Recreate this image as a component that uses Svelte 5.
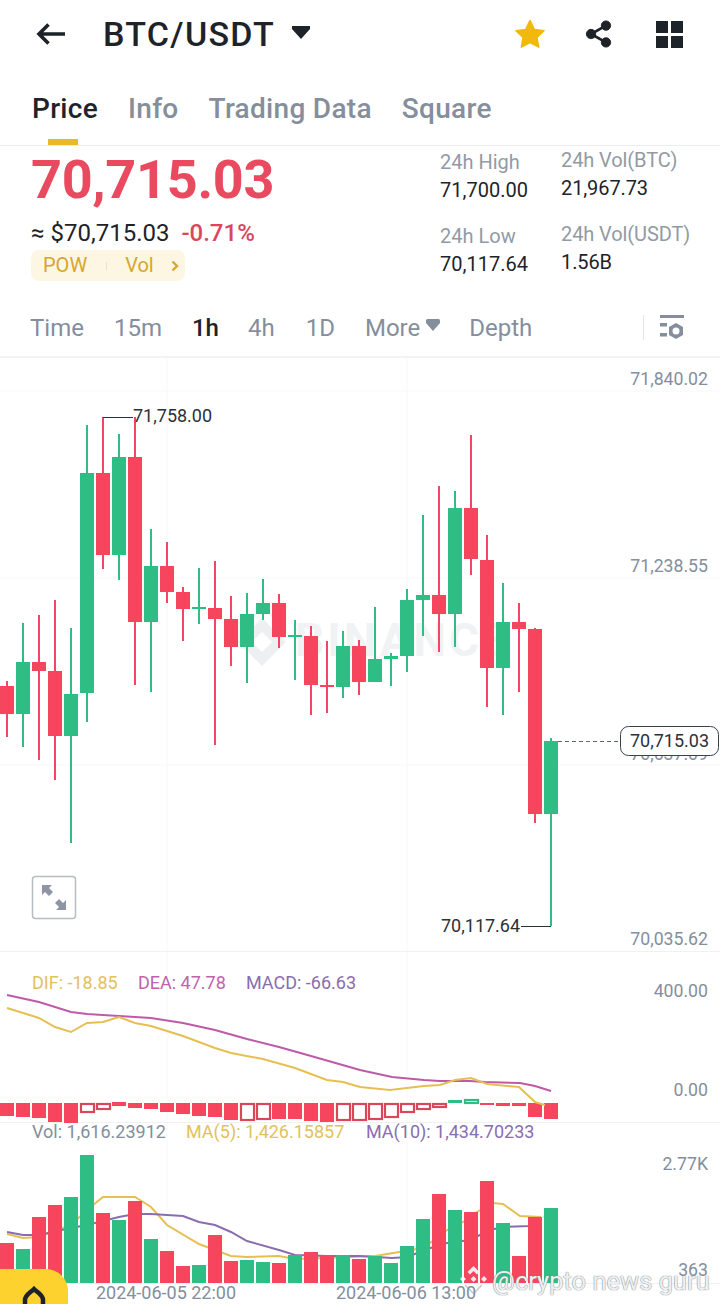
<script>
  const red = '#f6465d';
  const green = '#2ebd85';

  // top, bottom, wickTop, wickBottom, up
  const candles = [
    [686, 714, 681, 737, 0], [662, 714, 623, 747, 1], [662, 671, 615, 760, 0], [671, 736, 600, 780, 0],
    [694, 736, 628, 843, 1], [473, 693, 425, 722, 1], [473, 555, 417, 569, 0], [457, 555, 434, 580, 1],
    [457, 622, 417, 685, 0], [566, 622, 529, 692, 1], [566, 592, 542, 603, 0], [592, 609, 587, 641, 0],
    [607, 609, 568, 624, 1], [608, 619, 561, 745, 0], [619, 647, 596, 666, 0], [614, 647, 593, 683, 1],
    [603, 614, 579, 620, 1], [603, 637, 594, 648, 0], [635, 637, 620, 680, 1], [636, 685, 626, 715, 0],
    [685, 687, 641, 713, 0], [646, 687, 631, 698, 1], [646, 682, 640, 695, 0], [659, 682, 607, 682, 1],
    [656, 659, 653, 686, 1], [600, 656, 589, 672, 1], [595, 600, 515, 636, 1], [595, 614, 486, 652, 0],
    [508, 614, 491, 647, 1], [508, 559, 435, 575, 0], [560, 668, 535, 707, 0], [622, 668, 583, 715, 1],
    [622, 629, 603, 692, 0], [629, 814, 628, 823, 0], [741, 814, 738, 926, 1]
  ];

  const volumes = [
    [1243, 0], [1249, 1], [1217, 0], [1205, 0], [1197, 1], [1155, 1], [1213, 0], [1220, 1], [1201, 0],
    [1239, 1], [1251, 0], [1266, 0], [1265, 1], [1235, 0], [1261, 0], [1260, 1], [1262, 1], [1263, 0],
    [1255, 1], [1252, 0], [1256, 0], [1255, 1], [1259, 0], [1256, 1], [1263, 1], [1246, 1], [1219, 1],
    [1194, 0], [1210, 1], [1212, 0], [1181, 0], [1223, 1], [1256, 0], [1217, 0], [1208, 1]
  ];

  // top, bottom, hollow, up
  const macd = [
    [1103, 1116, 0, 0], [1103, 1117, 0, 0], [1103, 1118, 0, 0], [1103, 1122, 0, 0], [1103, 1123, 0, 0],
    [1103, 1112, 1, 0], [1103, 1109, 1, 0], [1102, 1106, 0, 0], [1103, 1108, 0, 0], [1103, 1109, 0, 0],
    [1103, 1112, 0, 0], [1103, 1114, 0, 0], [1103, 1116, 0, 0], [1103, 1117, 0, 0], [1103, 1120, 0, 0],
    [1103, 1120, 1, 0], [1103, 1119, 1, 0], [1103, 1119, 0, 0], [1103, 1119, 0, 0], [1103, 1121, 0, 0],
    [1103, 1122, 0, 0], [1103, 1120, 1, 0], [1103, 1120, 1, 0], [1103, 1119, 1, 0], [1103, 1117, 1, 0],
    [1103, 1112, 1, 0], [1103, 1109, 1, 0], [1103, 1107, 1, 0], [1100, 1103, 0, 1], [1099, 1103, 1, 1],
    [1103, 1105, 0, 0], [1103, 1106, 0, 0], [1103, 1106, 0, 0], [1103, 1117, 0, 0], [1103, 1119, 0, 0]
  ];

  const xAt = (i) => 7 + i * 16;

  const dea = '7,995 39,1002 71,1012 87,1014 119,1016 151,1018 183,1023 215,1030 247,1039 279,1047 311,1056 360,1070 392,1077 424,1080 440,1081 470,1081 485,1082 520,1083 535,1086 551,1091';
  const dif = '7,1008 39,1018 55,1027 71,1032 87,1023 103,1022 119,1017 135,1023 151,1026 183,1036 215,1048 231,1053 263,1059 295,1068 327,1080 343,1082 360,1087 390,1090 424,1086 440,1085 455,1080 471,1078 487,1084 519,1087 535,1102 545,1105';
  const ma5 = '7,1234 23,1238 39,1237 71,1225 87,1210 103,1197 119,1197 135,1197 151,1207 167,1225 199,1244 231,1256 247,1257 279,1256 295,1259 327,1258 375,1256 423,1248 430,1243 447,1230 463,1222 477,1212 493,1203 503,1204 520,1216 541,1217';
  const ma10 = '7,1232 23,1235 39,1235 71,1228 87,1225 119,1217 135,1214 151,1214 183,1216 199,1222 215,1225 231,1232 247,1241 279,1250 295,1255 327,1256 360,1256 392,1258 408,1257 424,1250 447,1243 470,1240 490,1230 503,1227 530,1226 541,1222';

  const tabs = ['Price', 'Info', 'Trading Data', 'Square'];
  const stats = [
    { label: '24h High', value: '71,700.00', label2: '24h Vol(BTC)', value2: '21,967.73' },
    { label: '24h Low', value: '70,117.64', label2: '24h Vol(USDT)', value2: '1.56B' }
  ];
</script>

<style>
  :global(body) {
    background: #fff;
    font-family: Roboto, "Liberation Sans", sans-serif;
    overflow: hidden;
  }

  .page {
    width: 720px;
    height: 1304px;
    position: relative;
    overflow: hidden;
    background: #fff;
  }

  header {
    height: 70px;
    display: flex;
    align-items: center;
    padding: 0 37px 2px 36px;
    box-sizing: border-box;
    color: #1e2329;
  }

  header h1 {
    margin: 0 0 0 37px;
    font-size: 34px;
    font-weight: 500;
    letter-spacing: 1.3px;
  }

  .caret {
    margin-left: 17px;
    margin-top: -4px;
  }

  .actions {
    margin-left: auto;
    display: flex;
    align-items: center;
  }

  .share {
    margin-left: 40px;
  }

  .apps {
    margin-left: 44px;
  }

  nav {
    height: 76px;
    display: flex;
    gap: 30px;
    padding: 0 32px;
    box-sizing: border-box;
    border-bottom: 1px solid #eaecef;
    font-size: 28px;
    font-weight: 500;
    letter-spacing: 0.3px;
    color: #848e9c;
  }

  nav span {
    position: relative;
    line-height: 78px;
    height: 75px;
  }

  nav span.on {
    color: #1e2329;
  }

  nav span.on::after {
    content: '';
    position: absolute;
    left: 16px;
    bottom: 0;
    width: 30px;
    height: 6px;
    background: #eab92a;
  }

  .summary {
    height: 159px;
    display: flex;
    justify-content: space-between;
    padding-left: 31px;
  }

  .last {
    margin: 0;
    height: 64px;
    font-size: 54px;
    line-height: 68px;
    font-weight: 700;
    letter-spacing: -0.3px;
    color: #ea4a60;
  }

  .fiat {
    margin-top: 9px;
    font-size: 24px;
    line-height: 28px;
    color: #1e2329;
    white-space: nowrap;
  }

  .fiat b {
    margin-left: 6px;
    font-weight: 500;
    color: #d9475c;
  }

  .tags {
    margin-top: 3px;
    width: 154px;
    height: 31px;
    box-sizing: border-box;
    border-radius: 8px;
    background: #fdf6e2;
    color: #d5a72c;
    font-size: 20px;
    line-height: 31px;
    display: flex;
    align-items: center;
    padding-left: 12px;
  }

  .tags i {
    width: 1px;
    height: 8px;
    background: #e8dfc4;
    margin: 0 18px 0 19px;
  }

  .tags svg {
    margin-left: 17px;
  }

  .stats {
    width: 280px;
    display: grid;
    grid-template-columns: 121px 1fr;
    grid-auto-rows: 74px;
    padding-top: 4px;
  }

  .stats div {
    display: flex;
    flex-direction: column;
    gap: 4px;
    font-size: 20px;
    line-height: 24px;
    color: #1e2329;
    white-space: nowrap;
  }

  .stats div span {
    color: #929aa5;
  }

  .stats div.alt {
    margin-top: -2px;
    letter-spacing: -0.1px;
  }

  .intervals {
    height: 53px;
    display: flex;
    align-items: center;
    padding: 0 0 6px 30px;
    font-size: 24px;
    color: #848e9c;
    border-bottom: 2px solid #f2f3f5;
    box-sizing: border-box;
  }

  .intervals span {
    white-space: nowrap;
  }

  .intervals .on {
    color: #1e2329;
    font-weight: 500;
  }

  .intervals .tools {
    margin-left: auto;
    height: 25px;
    width: 77px;
    border-left: 1px solid #e4e6ea;
    display: flex;
    justify-content: flex-end;
    padding-right: 35px;
    box-sizing: border-box;
  }

  .chart {
    display: block;
    font-family: Roboto, "Liberation Sans", sans-serif;
  }

  .axis {
    font-size: 17.7px;
    fill: #848e9c;
  }

  .tip {
    font-size: 18px;
    fill: #2b3139;
  }

  .legend {
    font-size: 18px;
  }

  .mark {
    font-size: 46px;
    font-weight: 700;
    fill: #f1f2f3;
    letter-spacing: 3px;
  }

  .dock {
    position: absolute;
    left: 0;
    bottom: 0;
    width: 68px;
    height: 35px;
    background: #fdd22f;
    border-radius: 0 22px 0 0;
    display: flex;
    justify-content: center;
    padding-top: 17px;
    box-sizing: border-box;
  }

  .stamp {
    position: absolute;
    left: 460px;
    top: 1265px;
    display: flex;
    gap: 5px;
    font-size: 25.5px;
    line-height: 33px;
    color: rgba(255, 255, 255, 0.9);
    text-shadow: 0 0 1px #7d838d, 0 0 1px #7d838d;
    white-space: nowrap;
  }
</style>

<div class="page">
  <header>
    <svg width="30" height="24" viewBox="0 0 30 24" fill="none" stroke="#1e2329" stroke-width="3.6">
      <path d="M29 12H3M12.5 2.5 3 12l9.5 9.5" />
    </svg>
    <h1>BTC/USDT</h1>
    <svg class="caret" width="18" height="13" viewBox="0 0 18 13"><path d="M0 0h18v3l-9 10L0 3z" fill="#1e2329" /></svg>
    <div class="actions">
      <svg width="30" height="30" viewBox="0 0 32 31"><path d="M16 1l4.600 9.600 10.400 1.400-7.600 7.200 1.900 10.400L16 24.600 6.700 29.600l1.900-10.400L1 12l10.400-1.400z" fill="#f0b90b" stroke="#f0b90b" stroke-linejoin="round" stroke-width="1.500" /></svg>
      <svg class="share" width="27" height="28" viewBox="0 0 28 30" fill="#1e2329" stroke="#1e2329">
        <path d="M22 6 6 15l16 9" fill="none" stroke-width="3" />
        <circle cx="22" cy="6" r="5" />
        <circle cx="6" cy="15" r="5" />
        <circle cx="22" cy="24" r="5" />
      </svg>
      <svg class="apps" width="27" height="27" viewBox="0 0 27 27" fill="#1e2329">
        <rect width="12" height="12" />
        <rect x="15" width="12" height="12" />
        <rect y="15" width="12" height="12" />
        <rect x="15" y="15" width="12" height="12" />
      </svg>
    </div>
  </header>

  <nav>
    {#each tabs as tab, i}
      <span class:on={i === 0}>{tab}</span>
    {/each}
  </nav>

  <section class="summary">
    <div>
      <p class="last">70,715.03</p>
      <div class="fiat">≈ $70,715.03 <b>-0.71%</b></div>
      <div class="tags">
        POW<i></i>Vol
        <svg width="8" height="12" viewBox="0 0 8 12" fill="none" stroke="#d5a72c" stroke-width="2.400"><path d="M1.500 1.500 6 6l-4.500 4.500" /></svg>
      </div>
    </div>
    <div class="stats">
      {#each stats as s}
        <div><span>{s.label}</span>{s.value}</div>
        <div class="alt"><span>{s.label2}</span>{s.value2}</div>
      {/each}
    </div>
  </section>

  <section class="intervals">
    <span>Time</span>
    <span style="margin-left: 30px">15m</span>
    <span class="on" style="margin-left: 30px">1h</span>
    <span style="margin-left: 29px">4h</span>
    <span style="margin-left: 31px">1D</span>
    <span style="margin-left: 30px">More</span>
    <svg style="margin-left: 6px; margin-top: -6px" width="14" height="12" viewBox="0 0 14 12"><path d="M0 1.500Q0 0 1.500 0h11Q14 0 14 1.500V4l-7 8-7-8z" fill="#848e9c" /></svg>
    <span style="margin-left: 29px">Depth</span>
    <div class="tools">
      <svg width="25" height="25" viewBox="0 0 25 25" fill="#848e9c">
        <rect width="24" height="3" />
        <rect y="8" width="7" height="3.500" />
        <rect y="18" width="7" height="3.500" />
        <path fill-rule="evenodd" d="M16 8l7 4v8l-7 4-7-4v-8zM16 12.500a3.500 3.500 0 1 0 0 7 3.500 3.500 0 0 0 0-7z" />
      </svg>
    </div>
  </section>

  <svg class="chart" width="720" height="946" viewBox="0 358 720 946">
    <path d="M0 391H720M0 578H720M0 765H720M167 358V1283M407 358V1283" fill="none" stroke="#f8f8f9" stroke-width="1" />
    <path d="M0 951.500H720M0 1122.500H720M0 1283.500H720" stroke="#f0f1f3" stroke-width="1" />

    <path d="M262 618l24 24-24 24-24-24zM262 632l-10 10 10 10 10-10z" fill="#eeeff1" fill-rule="evenodd" />
    <text class="mark" x="295" y="656">BINANCE</text>

    {#each candles as [top, bottom, wickTop, wickBottom, up], i}
      <rect x={xAt(i) - 1} y={wickTop} width="2" height={wickBottom - wickTop} fill={up ? green : red} />
      <rect x={xAt(i) - 7} y={top} width="14" height={bottom - top} fill={up ? green : red} />
    {/each}

    <path d="M103 417.500H133M521 926.500H551" stroke="#2b3139" stroke-width="1" />
    <text class="tip" x="133" y="422">71,758.00</text>
    <text class="tip" x="441" y="932">70,117.64</text>

    <path d="M558 741.500H620" stroke="#5e6673" stroke-width="1" stroke-dasharray="4 3" />

    <text class="axis" x="708" y="385" text-anchor="end">71,840.02</text>
    <text class="axis" x="708" y="572" text-anchor="end">71,238.55</text>
    <text class="axis" x="708" y="760" text-anchor="end">70,637.09</text>
    <text class="axis" x="708" y="945" text-anchor="end">70,035.62</text>
    <rect x="620.500" y="726.500" width="98" height="29" rx="8" fill="#fff" stroke="#3a414b" />
    <text class="tip" x="669.500" y="747" text-anchor="middle">70,715.03</text>

    <rect x="32.500" y="876.500" width="43" height="42" rx="3" fill="#fff" stroke="#b7bbc2" stroke-width="1.500" />
    <path d="M42 885h10l-3 3 4 4-4 4-4-4-3 3zM66 910H56l3-3-4-4 4-4 4 4 3-3z" fill="#8f96a3" />

    <text class="legend" x="32" y="989" fill="#e2c15c">DIF: -18.85</text>
    <text class="legend" x="138" y="989" fill="#c062ae">DEA: 47.78</text>
    <text class="legend" x="246" y="989" fill="#8a6db0">MACD: -66.63</text>
    <text class="axis" x="708" y="997" text-anchor="end">400.00</text>
    <text class="axis" x="708" y="1096" text-anchor="end">0.00</text>

    {#each macd as [top, bottom, hollow, up], i}
      {#if hollow}
        <rect x={xAt(i) - 6} y={top + 1} width="13" height={bottom - top - 1} fill="#fff" stroke={up ? green : '#d9475c'} stroke-width="2.200" />
      {:else}
        <rect x={xAt(i) - 7} y={top} width="14" height={bottom - top} fill={up ? green : red} />
      {/if}
    {/each}
    <polyline points={dea} fill="none" stroke="#bf5aa8" stroke-width="2" />
    <polyline points={dif} fill="none" stroke="#e6bf52" stroke-width="2" />

    <text class="legend" x="32" y="1138" fill="#848e9c">Vol: 1,616.23912</text>
    <text class="legend" x="186" y="1138" fill="#e2c15c">MA(5): 1,426.15857</text>
    <text class="legend" x="366" y="1138" fill="#8a6db0">MA(10): 1,434.70233</text>
    <text class="axis" x="708" y="1170" text-anchor="end">2.77K</text>
    <text class="axis" x="708" y="1276" text-anchor="end">363</text>

    <polyline points={ma5} fill="none" stroke="#e6bf52" stroke-width="2" />
    <polyline points={ma10} fill="none" stroke="#8a6db0" stroke-width="2" />
    {#each volumes as [top, up], i}
      <rect x={xAt(i) - 7} y={top} width="14" height={1283 - top} fill={up ? green : red} />
    {/each}

    <text class="legend" x="166" y="1299" text-anchor="middle" fill="#848e9c">2024-06-05 22:00</text>
    <text class="legend" x="406" y="1299" text-anchor="middle" fill="#848e9c">2024-06-06 13:00</text>
  </svg>

  <div class="dock">
    <svg width="24" height="18" viewBox="0 0 24 18" fill="none" stroke="#1e2329" stroke-width="4.500">
      <path d="M3 18v-4C3 9 8 7 12 3c4 4 9 6 9 11v4" />
    </svg>
  </div>

  <div class="stamp">
    <svg width="27" height="32" viewBox="0 0 27 32">
      <path d="M13.500 1l6 6-2.500 2.500-3.500-3.500-3.500 3.500L7.500 7zM13.500 11l3 3-3 3-3-3zM3 11l3 3-3 3-3-3zM24 11l3 3-3 3-3-3z" fill="rgba(255,255,255,0.88)" />
      <path d="M5 20l8.500 8.500L22 20" fill="none" stroke="rgba(140,145,155,0.5)" stroke-width="1.500" />
    </svg>
    <span>@crypto news guru</span>
  </div>
</div>
